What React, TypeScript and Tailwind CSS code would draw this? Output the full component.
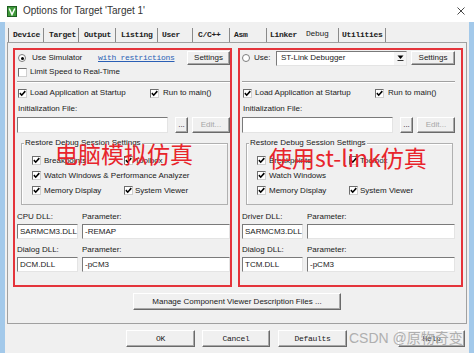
import type { ReactNode } from 'react';

const mono = "font-['Liberation_Mono',monospace]";

const tabs = [
  { label: 'Device', cls: 'w-[35px] pl-[4px] border-l border-[#8a8a8a]' },
  { label: 'Target', cls: 'w-[35px] pl-[5px] border-l border-[#8a8a8a]' },
  { label: 'Output', cls: 'w-[37px] pl-[5px] border-l border-[#8a8a8a]' },
  { label: 'Listing', cls: 'w-[42px] pl-[5px] border-l border-[#8a8a8a]' },
  { label: 'User', cls: 'w-[35px] pl-[4px] border-l border-[#8a8a8a]' },
  { label: 'C/C++', cls: 'w-[37px] pl-[5px] border-l border-[#8a8a8a]' },
  { label: 'Asm', cls: 'w-[37px] pl-[4px] border-l border-[#8a8a8a]' },
  { label: 'Linker', cls: 'w-[35px] pl-[3px] border-l border-[#8a8a8a]' },
  { label: 'Debug', cls: 'w-[37px] pl-[5px] pb-[2px] font-normal' },
  { label: 'Utilities', cls: 'w-[48px] pl-[3px] border-x border-[#8a8a8a]' },
];

function Check({ checked = true }: { checked?: boolean }) {
  return (
    <span className="flex h-[9px] w-[9px] shrink-0 items-center justify-center border border-t-[#6e6e6e] border-l-[#6e6e6e] border-r-[#cfcfcf] border-b-[#cfcfcf] bg-white">
      {checked && (
        <svg viewBox="0 0 8 8" className="h-[7px] w-[7px]">
          <path d="M1 3.6 L3.1 5.9 L7.2 1.3" fill="none" stroke="#000" strokeWidth="1.8" />
        </svg>
      )}
    </span>
  );
}

function Radio({ on = false }: { on?: boolean }) {
  return (
    <span className="flex h-[8px] w-[8px] shrink-0 items-center justify-center rounded-full border border-[#7d7d7d] bg-white">
      {on && <span className="h-[3px] w-[3px] rounded-full bg-black" />}
    </span>
  );
}

function Btn({ className = '', children, disabled = false }: { className?: string; children: ReactNode; disabled?: boolean }) {
  return (
    <div
      className={`flex shrink-0 items-center justify-center border border-t-white border-l-white border-r-[#6a6a6a] border-b-[#6a6a6a] bg-[#f0f0f0] shadow-[inset_-1px_-1px_0_#a8a8a8] ${disabled ? 'text-[#a6a6a6]' : ''} ${className}`}
    >
      {children}
    </div>
  );
}

function Field({ className = '', value = '' }: { className?: string; value?: string }) {
  return (
    <div className={`flex h-[15px] items-center border border-t-[#7a7a7a] border-l-[#7a7a7a] border-r-[#e4e4e4] border-b-[#e4e4e4] bg-white pl-[2px] ${className}`}>
      {value}
    </div>
  );
}

type BoxProps = {
  boxClass: string;
  head: ReactNode;
  second: ReactNode;
  watch: string;
  dllLabel: string;
  dll1: string;
  param1: string;
  dll2: string;
  param2: string;
  overlay: string;
  overlayClass: string;
};

function DebugBox({ boxClass, head, second, watch, dllLabel, dll1, param1, dll2, param2, overlay, overlayClass }: BoxProps) {
  return (
    <div className={`relative flex h-[239px] flex-col border-2 border-[#e4343b] ${boxClass}`}>
      <div className="flex h-[16px] items-center">{head}</div>
      <div className="flex h-[12px] items-center pl-[3px]">{second}</div>
      <div className="h-[8px] pl-[2px] pt-[3px]">
        <div className="border-t border-b border-t-[#a0a0a0] border-b-white" />
      </div>
      <div className="flex h-[14px] items-center pl-[3px]">
        <Check />
        <span className="ml-[3px] w-[120px]">Load Application at Startup</span>
        <Check />
        <span className="ml-[4px]">Run to main()</span>
      </div>
      <div className="flex h-[17px] items-center pl-[3px]">Initialization File:</div>
      <div className="flex h-[16px]">
        <Field className="ml-[2px] h-[16px] w-[151px]" />
        <Btn className="ml-[7px] w-[13px]">...</Btn>
        <Btn className="ml-auto w-[38px]" disabled>
          Edit...
        </Btn>
      </div>
      <div className="relative ml-[6px] mr-[2px] mt-[10px] h-[62px] border border-[#b0b0b0] shadow-[inset_1px_1px_0_#ffffff]">
        <span className="absolute -top-[6px] left-[2px] bg-[#f0f0f0] px-[1px] leading-[10px]">Restore Debug Session Settings</span>
        <div className="pl-[10px] pt-[9px]">
          <div className="flex h-[15px] items-center">
            <Check />
            <span className="ml-[3px] w-[80px]">Breakpoints</span>
            <Check />
            <span className="ml-[2px]">Toolbox</span>
          </div>
          <div className="flex h-[15px] items-center">
            <Check />
            <span className="ml-[3px]">{watch}</span>
          </div>
          <div className="flex h-[15px] items-center">
            <Check />
            <span className="ml-[3px] w-[80px]">Memory Display</span>
            <Check />
            <span className="ml-[2px]">System Viewer</span>
          </div>
        </div>
      </div>
      <div className="mt-[4px] flex h-[15px] items-center pl-[2px]">
        <span className="w-[65px]">{dllLabel}</span>
        <span>Parameter:</span>
      </div>
      <div className="flex h-[15px]">
        <Field className="ml-[2px] w-[61px]" value={dll1} />
        <Field className="ml-[4px] flex-1" value={param1} />
      </div>
      <div className="mt-[3px] flex h-[15px] items-center pl-[2px]">
        <span className="w-[65px]">Dialog DLL:</span>
        <span>Parameter:</span>
      </div>
      <div className="flex h-[15px]">
        <Field className="ml-[2px] w-[61px]" value={dll2} />
        <Field className="ml-[4px] flex-1" value={param2} />
      </div>
      <div className={`absolute font-['Noto_Sans_CJK_SC',sans-serif] text-[23px] leading-[23px] text-[#e8242b] ${overlayClass}`}>{overlay}</div>
    </div>
  );
}

export default function App() {
  return (
    <div className="relative flex h-[353px] w-[474px] flex-col overflow-hidden bg-white font-['Liberation_Sans',Arial,sans-serif] text-[8px] leading-[10px] text-[#1a1a1a]">
      <div className="flex h-[22px] shrink-0 items-center pl-[7px]">
        <svg viewBox="0 0 10 11" className="h-[11px] w-[10px]">
          <rect x="0.5" y="0.5" width="9" height="10" fill="#3f9a3a" stroke="#1f5e22" />
          <path d="M2.2 2.5 L5 8.5 L7.8 2.5" fill="none" stroke="#fff" strokeWidth="1.5" />
        </svg>
        <span className="ml-[6px] text-[10px] leading-[12px] text-[#333]">Options for Target 'Target 1'</span>
        <svg viewBox="0 0 8 8" className="ml-auto mr-[9px] h-[8px] w-[8px]">
          <path d="M0.5 0.5 L7.5 7.5 M7.5 0.5 L0.5 7.5" stroke="#333" strokeWidth="0.9" />
        </svg>
      </div>

      <div className="flex flex-1">
        <div className="w-[5px] bg-[#a3c9ea]" />
        <div className="flex w-[464px] flex-col bg-[#f0f0f0]">
          <div className={`flex h-[20px] items-end pl-[3px] ${mono} text-[8px] font-bold tracking-[-0.3px] text-[#222]`}>
            {tabs.map((t) => (
              <div key={t.label} className={`flex h-[14px] items-center ${t.cls}`}>
                {t.label}
              </div>
            ))}
          </div>

          <div className="ml-[2px] h-[282px] w-[460px] border border-[#a0a0a0] pl-[5px] pt-[5px]">
            <div className="flex gap-[6px]">
              <DebugBox
                boxClass="w-[219px]"
                head={
                  <div className="flex w-full items-center pl-[3px]">
                    <Radio on />
                    <span className="ml-[6px] w-[66px]">Use Simulator</span>
                    <span className={`${mono} tracking-[-0.3px] text-[#2a5fb5] underline`}>with restrictions</span>
                    <Btn className="ml-auto h-[14px] w-[43px]">Settings</Btn>
                  </div>
                }
                second={
                  <>
                    <Check checked={false} />
                    <span className="ml-[3px]">Limit Speed to Real-Time</span>
                  </>
                }
                watch="Watch Windows & Performance Analyzer"
                dllLabel="CPU DLL:"
                dll1="SARMCM3.DLL"
                param1="-REMAP"
                dll2="DCM.DLL"
                param2="-pCM3"
                overlay="电脑模拟仿真"
                overlayClass="left-[40px] top-[92px]"
              />
              <DebugBox
                boxClass="w-[225px] pr-[6px]"
                head={
                  <div className="flex w-full items-center pl-[2px]">
                    <Radio />
                    <span className="ml-[4px] w-[22px]">Use:</span>
                    <div className="flex h-[15px] w-[131px] items-center border border-t-[#7a7a7a] border-l-[#7a7a7a] border-r-[#e4e4e4] border-b-[#e4e4e4] bg-white pl-[4px]">
                      <span className="flex-1">ST-Link Debugger</span>
                      <span className="flex h-full w-[12px] flex-col items-center justify-center bg-[#f4f4f4]">
                        <svg viewBox="0 0 7 6" className="h-[6px] w-[7px]">
                          <path d="M0.5 0.5 L6.5 0.5 L3.5 4 Z" fill="#000" />
                          <path d="M0.5 5.5 L6.5 5.5" stroke="#000" strokeWidth="0.8" />
                        </svg>
                      </span>
                    </div>
                    <Btn className="ml-auto h-[14px] w-[44px]">Settings</Btn>
                  </div>
                }
                second={null}
                watch="Watch Windows"
                dllLabel="Driver DLL:"
                dll1="SARMCM3.DLL"
                param1=""
                dll2="TCM.DLL"
                param2="-pCM3"
                overlay="使用st-link仿真"
                overlayClass="left-[29px] top-[96px]"
              />
            </div>
            <Btn className="ml-[120px] mt-[6px] h-[17px] w-[208px]">Manage Component Viewer Description Files ...</Btn>
          </div>

          <div className={`mt-[6px] flex h-[17px] pl-[121px] ${mono} tracking-[-0.3px]`}>
            <Btn className="w-[69px] border-l-[#a0a0a0] border-t-[#a0a0a0]">OK</Btn>
            <Btn className="ml-[7px] w-[68px] border-l-[#a0a0a0] border-t-[#a0a0a0]">Cancel</Btn>
            <Btn className="ml-[8px] w-[69px] border-l-[#a0a0a0] border-t-[#a0a0a0]">Defaults</Btn>
            <Btn className="ml-[51px] w-[67px] border-l-[#a0a0a0] border-t-[#a0a0a0]">Help</Btn>
          </div>
        </div>
        <div className="w-[5px] bg-[#a3c9ea]" />
      </div>

      <div className="absolute left-[349px] top-[329px] font-['Liberation_Sans','Noto_Sans_CJK_SC',sans-serif] text-[14px] leading-[18px] text-[#a9a9a9] opacity-90">
        CSDN @原物奇变
      </div>
    </div>
  );
}
